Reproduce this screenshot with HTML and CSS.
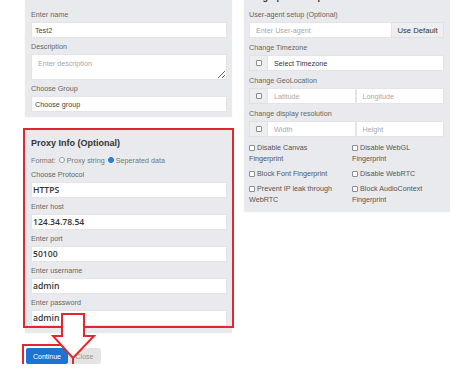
FILE: index.html
```html
<!DOCTYPE html>
<html lang="en">
<head>
	<meta charset="UTF-8">
	<title>Profile setup</title>
	<link rel="stylesheet" href="styles.css">
</head>
<body>
	<div class="page">
		<div class="col col-left">
			<div class="card card-top">
				<label class="lbl">Enter name</label>
				<input class="inp" type="text" value="Test2">
				<label class="lbl">Description</label>
				<textarea class="inp area" placeholder="Enter description"></textarea>
				<label class="lbl">Choose Group</label>
				<input class="inp" type="text" value="Choose group">
			</div>
			<div class="card card-proxy">
				<div class="heading">Proxy Info (Optional)</div>
				<div class="format">
					<span>Format:</span>
					<span class="radio"></span><span>Proxy string</span>
					<span class="radio checked"></span><span>Seperated data</span>
				</div>
				<label class="lbl">Choose Protocol</label>
				<input class="inp big" type="text" value="HTTPS">
				<label class="lbl">Enter host</label>
				<input class="inp big" type="text" value="124.34.78.54">
				<label class="lbl">Enter port</label>
				<input class="inp big" type="text" value="50100">
				<label class="lbl">Enter username</label>
				<input class="inp big" type="text" value="admin">
				<label class="lbl">Enter password</label>
				<input class="inp big" type="text" value="admin">
			</div>
			<div class="actions">
				<button class="btn btn-primary">Continue</button>
				<button class="btn btn-close">Close</button>
			</div>
		</div>
		<div class="col col-right">
			<div class="card card-right">
				<div class="heading heading-cut">Fingerprint setup</div>
				<label class="lbl">User-agent setup (Optional)</label>
				<div class="group">
					<input class="inp" type="text" placeholder="Enter User-agent">
					<span class="append">Use Default</span>
				</div>
				<label class="lbl">Change Timezone</label>
				<div class="group">
					<span class="addon"><span class="cb"></span></span>
					<input class="inp dark" type="text" value="Select Timezone">
				</div>
				<label class="lbl">Change GeoLocation</label>
				<div class="group">
					<span class="addon"><span class="cb"></span></span>
					<input class="inp" type="text" placeholder="Latitude">
					<input class="inp" type="text" placeholder="Longitude">
				</div>
				<label class="lbl">Change display resolution</label>
				<div class="group">
					<span class="addon"><span class="cb"></span></span>
					<input class="inp" type="text" placeholder="Width">
					<input class="inp" type="text" placeholder="Height">
				</div>
				<div class="checks">
					<div><span class="cb"></span>Disable Canvas Fingerprint</div>
					<div><span class="cb"></span>Disable WebGL Fingerprint</div>
					<div><span class="cb"></span>Block Font Fingerprint</div>
					<div><span class="cb"></span>Disable WebRTC</div>
					<div><span class="cb"></span>Prevent IP leak through WebRTC</div>
					<div><span class="cb"></span>Block AudioContext Fingerprint</div>
				</div>
			</div>
		</div>
		<!-- annotations drawn over the form -->
		<div class="mark mark-proxy"></div>
		<div class="mark mark-btn"></div>
		<svg class="arrow" width="46" height="50" viewBox="0 0 46 50">
			<polygon points="11,2 33,2 33,24 43,24 22,46 2,24 11,24" fill="#fff" stroke="#e3272e" stroke-width="2" stroke-linejoin="miter"/>
		</svg>
	</div>
</body>
</html>
```

FILE: styles.css
```css
*{
	box-sizing: border-box;
}
body{
	margin: 0;
	background: #fff;
	font-family: "Liberation Sans", Arial, sans-serif;
	font-size: 7.2px;
	color: #555;
}
.page{
	position: relative;
	display: flex;
	align-items: flex-start;
	gap: 12px;
	padding-left: 25px;
	margin-top: -10px;
}
.col-left{
	width: 207px;
}
.col-right{
	width: 206px;
}
.card{
	background: #e9eaed;
	box-shadow: 0 0 1px rgba(0,0,0,.18);
	border-radius: 2px;
}
.card-top{
	padding: 20px 5px 5px 6px;
}
.card-proxy{
	margin-top: 12px;
	padding: 8px 5px 7px 6px;
}
.card-right{
	padding: 2px 6px 7px 5px;
}
.heading{
	height: 12px;
	line-height: 12px;
	font-size: 9px;
	font-weight: bold;
	color: #333;
	margin-bottom: 6px;
}
.heading-cut{
	margin-top: -1px;
	margin-bottom: 7px;
}
.lbl{
	display: block;
	height: 10px;
	line-height: 10px;
	margin-bottom: 2px;
	color: #666;
}
.inp{
	display: block;
	width: 100%;
	height: 16px;
	margin: 0 0 4px;
	padding: 0 3px;
	border: 1px solid #e4e4e6;
	background: #fff;
	font-family: "Liberation Sans", Arial, sans-serif;
	font-size: 7.2px;
	color: #444;
	outline: none;
}
.inp:last-child{
	margin-bottom: 0;
}
.inp::placeholder{
	color: #a8a8a8;
}
.area{
	height: 26px;
	padding: 4px 6px;
	resize: vertical;
}
.big{
	padding: 0 1px;
	font-family: "Open Sans", "Liberation Sans", sans-serif;
	font-weight: 600;
	font-size: 8.6px;
	color: #333;
}
.format{
	display: flex;
	align-items: center;
	gap: 2px;
	height: 10px;
	margin-bottom: 5px;
	color: #777;
}
.radio{
	display: inline-block;
	width: 6px;
	height: 6px;
	border: 1px solid #999;
	border-radius: 50%;
	background: #fff;
	margin-left: 1px;
}
.radio.checked{
	border-color: #1b74d3;
	background: #2a82e0;
}
.actions{
	display: flex;
	margin-top: 15px;
	padding-left: 1px;
}
.btn{
	height: 16px;
	border: 0;
	padding: 0;
	font-family: "Liberation Sans", Arial, sans-serif;
	font-size: 7px;
}
.btn-primary{
	width: 42px;
	background: #1b74d3;
	color: #fff;
	border-radius: 2px;
}
.btn-close{
	width: 33px;
	background: #e4e4e4;
	color: #949494;
	border-radius: 0 2px 2px 0;
}
.group{
	display: flex;
	height: 16px;
	margin-bottom: 5px;
}
.group .inp{
	flex: 1;
	width: auto;
	min-width: 0;
	margin: 0;
	padding: 0 6px;
}
.group .dark{
	color: #333;
}
.append{
	width: 52px;
	display: flex;
	align-items: center;
	justify-content: center;
	background: #eceef0;
	border: 1px solid #e0e1e4;
	border-left: 0;
	font-size: 7.7px;
	color: #333;
}
.addon{
	width: 18px;
	display: flex;
	align-items: center;
	justify-content: center;
	background: #eceef0;
	border: 1px solid #e0e1e4;
	border-right: 0;
}
.cb{
	display: inline-block;
	width: 6px;
	height: 6px;
	border: 1px solid #8c8c8c;
	border-radius: 1px;
	background: #fff;
	margin-right: 2px;
	vertical-align: -.5px;
}
.addon .cb{
	margin: 0;
}
.checks{
	display: grid;
	grid-template-columns: 92px 92px;
	column-gap: 11px;
	row-gap: 4px;
	margin-top: 3px;
	line-height: 11px;
	color: #555;
}
.mark{
	position: absolute;
	border: 2px solid #e3272e;
}
.mark-proxy{
	left: 23px;
	top: 138px;
	width: 211px;
	height: 200px;
}
.mark-btn{
	left: 22px;
	top: 354px;
	width: 52px;
	height: 26px;
}
.arrow{
	position: absolute;
	left: 51px;
	top: 322px;
}
```
